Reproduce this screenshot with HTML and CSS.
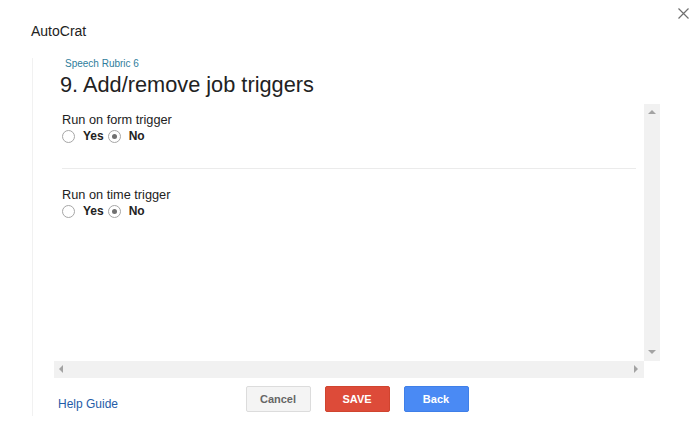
FILE: index.html
```html
<!DOCTYPE html>
<html lang="en">
<head>
<meta charset="utf-8">
<title>AutoCrat</title>
<link rel="stylesheet" href="styles.css">
</head>
<body>
<div class="dialog">
  <div class="header">
    <div class="title">AutoCrat</div>
    <button class="close" aria-label="Close">
      <svg width="11" height="11" viewBox="0 0 11 11"><path d="M0.5 0.5 L10.5 10.5 M10.5 0.5 L0.5 10.5" stroke="#6f6f6f" stroke-width="1.2" fill="none"/></svg>
    </button>
  </div>
  <div class="panel">
    <div class="subtitle">Speech Rubric 6</div>
    <h1 class="heading">9. Add/remove job triggers</h1>
    <div class="scroller">
      <div class="content">
        <div class="field first">
          <div class="field-label">Run on form trigger</div>
          <div class="radios">
            <span class="radio"></span><span class="opt">Yes</span>
            <span class="radio checked"></span><span class="opt">No</span>
          </div>
        </div>
        <div class="field">
          <div class="field-label">Run on time trigger</div>
          <div class="radios">
            <span class="radio"></span><span class="opt">Yes</span>
            <span class="radio checked"></span><span class="opt">No</span>
          </div>
        </div>
      </div>
      <div class="vbar">
        <span class="arrow up"></span>
        <span class="arrow down"></span>
      </div>
      <div class="hbar">
        <span class="arrow left"></span>
        <span class="arrow right"></span>
      </div>
      <div class="corner"></div>
    </div>
    <div class="footer">
      <a class="help" href="#">Help Guide</a>
      <div class="buttons">
        <button class="btn cancel">Cancel</button>
        <button class="btn save">SAVE</button>
        <button class="btn back">Back</button>
      </div>
      <div></div>
    </div>
  </div>
</div>
</body>
</html>
```
FILE: styles.css
```css
* { box-sizing: border-box; }
html, body { margin: 0; padding: 0; background: #fff; }
body {
  font-family: "Liberation Sans", Arial, sans-serif;
  color: #222;
  width: 696px;
  height: 434px;
  overflow: hidden;
}
.header {
  display: flex;
  justify-content: space-between;
  align-items: flex-start;
  padding: 8px 7px 0 31px;
}
.title {
  margin-top: 15px;
  font-size: 14px;
  line-height: 16px;
  color: #222;
}
.close {
  border: 0;
  background: none;
  padding: 0;
  width: 11px;
  height: 11px;
  display: block;
}
.close svg { display: block; }
.panel {
  margin: 19px 36px 0 32px;
  border-left: 1px solid #f1f1f1;
  padding: 0 0 4px 21px;
}
.subtitle {
  font-size: 10px;
  line-height: 12px;
  color: #2f7d9c;
  padding-left: 11px;
}
.heading {
  margin: 2px 0 0;
  padding-left: 6px;
  font-size: 21.75px;
  line-height: 26px;
  font-weight: normal;
  color: #222;
}
.scroller {
  margin-top: 6px;
  display: grid;
  grid-template-columns: 1fr 16px;
  grid-template-rows: 257px 17px;
}
.content {
  padding: 9px 8px 0;
  overflow: hidden;
}
.field-label {
  font-size: 12.75px;
  line-height: 14px;
  color: #222;
}
.field.first {
  padding-bottom: 25px;
  border-bottom: 1px solid #ebebeb;
  margin-bottom: 19px;
}
.radios {
  display: flex;
  align-items: center;
  margin-top: 2px;
  height: 14px;
}
.radio {
  width: 13px;
  height: 13px;
  border: 1px solid #a6a6a6;
  border-radius: 50%;
  background: #fff;
  margin-right: 8px;
  position: relative;
  flex: none;
}
.radio.checked::after {
  content: "";
  position: absolute;
  left: 3px;
  top: 3px;
  width: 5px;
  height: 5px;
  border-radius: 50%;
  background: #707070;
}
.opt {
  font-size: 12px;
  font-weight: bold;
  line-height: 14px;
  color: #222;
  margin-right: 4px;
}
.vbar, .hbar {
  background: #f1f1f1;
  position: relative;
}
.corner { background: #fff; }
.arrow {
  position: absolute;
  width: 0;
  height: 0;
  border: 4px solid transparent;
}
.arrow.up {
  left: 4px;
  top: 6px;
  border-bottom-color: #a3a3a3;
  border-top-width: 0;
}
.arrow.down {
  left: 4px;
  bottom: 7px;
  border-top-color: #a3a3a3;
  border-bottom-width: 0;
}
.arrow.left {
  left: 5px;
  top: 4px;
  border-right-color: #a3a3a3;
  border-left-width: 0;
}
.arrow.right {
  right: 6px;
  top: 4px;
  border-left-color: #a3a3a3;
  border-right-width: 0;
}
.footer {
  margin-top: 8px;
  display: grid;
  grid-template-columns: 1fr auto 1fr;
  align-items: end;
}
.help {
  font-size: 12px;
  line-height: 14px;
  color: #1f5ca8;
  text-decoration: none;
  padding-left: 4px;
  margin-bottom: 1px;
  justify-self: start;
}
.buttons {
  display: flex;
  gap: 14px;
}
.btn {
  width: 65px;
  height: 26px;
  border-radius: 2px;
  font-family: "Liberation Sans", Arial, sans-serif;
  font-size: 11px;
  font-weight: bold;
  padding: 0;
  line-height: 24px;
}
.cancel {
  background: #f4f4f4;
  border: 1px solid #dcdcdc;
  color: #666;
}
.save {
  background: #dd4b39;
  border: 1px solid #d0442f;
  color: #fff;
}
.back {
  background: #4a8af4;
  border: 1px solid #3f7fe8;
  color: #fff;
}
```
